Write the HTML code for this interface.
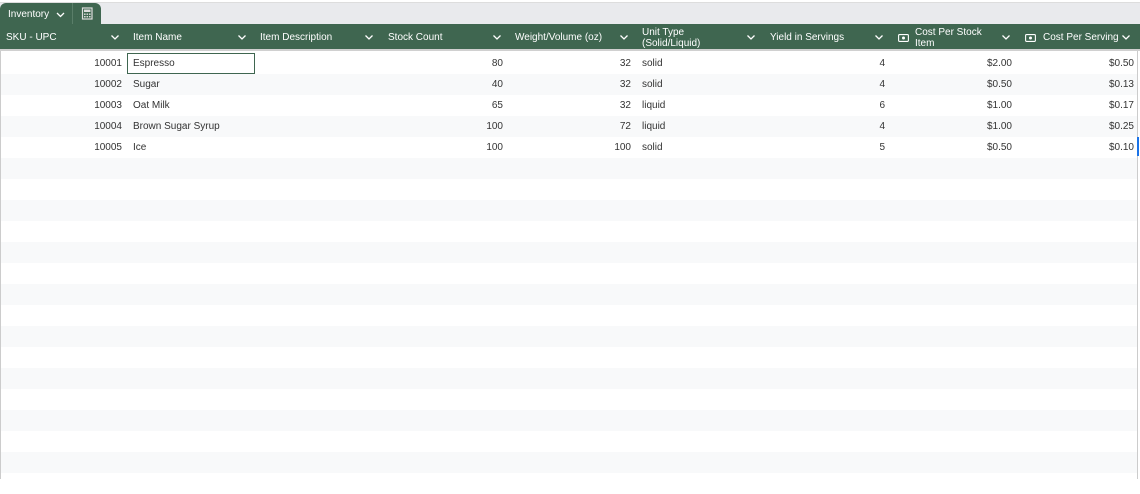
<!DOCTYPE html>
<html><head><style>
*{box-sizing:border-box;margin:0;padding:0}
body{width:1140px;height:479px;overflow:hidden;background:#fff;font-family:"Liberation Sans",sans-serif;font-size:10px;color:#333;position:relative}
.top{position:absolute;left:0;top:0;width:1140px;height:3px;background:#fff;border-bottom:1px solid #ddd}
.bar{position:absolute;left:0;top:3px;width:1140px;height:21px;background:#e9eaed}
.tab{position:absolute;left:0;top:3px;width:101px;height:21px;background:#3f6650;border-radius:6px 6px 0 0;color:#fff;font-size:10px}
.hdr{position:absolute;left:0;top:24px;width:1140px;height:27px;background:#3f6650;color:#fff;border-bottom:2px solid #d0d0d0}
.hc{position:absolute;top:1px;height:25px;display:flex;align-items:center;line-height:11px}
.chev{position:absolute;top:8px;width:10px;height:10px}
.row{position:absolute;left:1px;width:1136px;height:21px}
.c{position:absolute;top:0;height:21px;line-height:21px;font-size:10px;color:#333}
.r{text-align:right}
</style></head><body>
<div class="top"></div>
<div class="bar"></div>
<div class="tab">
<span style="position:absolute;left:8px;top:6px">Inventory</span>
<svg style="position:absolute;left:56px;top:9px" width="9" height="6" viewBox="0 0 9 6"><path d="M1 1l3.5 3.5L8 1" stroke="#fff" stroke-width="1.3" fill="none"/></svg>
<div style="position:absolute;left:72px;top:0;width:1px;height:21px;background:#5a7e69"></div>
<svg style="position:absolute;left:81px;top:4px" width="12" height="13" viewBox="0 0 12 13"><rect x="1.5" y="1" width="9.5" height="11" fill="none" stroke="#ddd" stroke-width="1.2"/><rect x="3" y="2.5" width="6.5" height="2.5" fill="#ddd"/><g fill="#ddd"><rect x="3" y="6.5" width="1.6" height="1.4"/><rect x="5.5" y="6.5" width="1.6" height="1.4"/><rect x="8" y="6.5" width="1.6" height="1.4"/><rect x="3" y="9" width="1.6" height="1.4"/><rect x="5.5" y="9" width="1.6" height="1.4"/><rect x="8" y="9" width="1.6" height="1.4"/></g></svg>
</div>
<div class="hdr">
<div class="hc" style="left:6px">SKU - UPC</div>
<div class="hc" style="left:133px">Item Name</div>
<div class="hc" style="left:260px">Item Description</div>
<div class="hc" style="left:388px">Stock Count</div>
<div class="hc" style="left:515px">Weight/Volume (oz)</div>
<div class="hc" style="left:642px">Unit Type<br>(Solid/Liquid)</div>
<div class="hc" style="left:770px">Yield in Servings</div>
<div class="hc" style="left:915px">Cost Per Stock<br>Item</div>
<div class="hc" style="left:1043px">Cost Per Serving</div>
<svg style="position:absolute;left:898px;top:10px" width="11" height="8" viewBox="0 0 11 8"><rect x="0.6" y="0.6" width="9.8" height="6.8" rx="1" fill="none" stroke="#fff" stroke-width="1.1"/><circle cx="5.5" cy="4" r="1.5" fill="#fff"/></svg>
<svg style="position:absolute;left:1025px;top:10px" width="11" height="8" viewBox="0 0 11 8"><rect x="0.6" y="0.6" width="9.8" height="6.8" rx="1" fill="none" stroke="#fff" stroke-width="1.1"/><circle cx="5.5" cy="4" r="1.5" fill="#fff"/></svg>
<svg class="chev" style="left:110px" viewBox="0 0 10 10"><path d="M1.5 3.5l3.5 3.5 3.5-3.5" stroke="#fff" stroke-width="1.3" fill="none"/></svg>
<svg class="chev" style="left:237px" viewBox="0 0 10 10"><path d="M1.5 3.5l3.5 3.5 3.5-3.5" stroke="#fff" stroke-width="1.3" fill="none"/></svg>
<svg class="chev" style="left:364px" viewBox="0 0 10 10"><path d="M1.5 3.5l3.5 3.5 3.5-3.5" stroke="#fff" stroke-width="1.3" fill="none"/></svg>
<svg class="chev" style="left:492px" viewBox="0 0 10 10"><path d="M1.5 3.5l3.5 3.5 3.5-3.5" stroke="#fff" stroke-width="1.3" fill="none"/></svg>
<svg class="chev" style="left:619px" viewBox="0 0 10 10"><path d="M1.5 3.5l3.5 3.5 3.5-3.5" stroke="#fff" stroke-width="1.3" fill="none"/></svg>
<svg class="chev" style="left:746px" viewBox="0 0 10 10"><path d="M1.5 3.5l3.5 3.5 3.5-3.5" stroke="#fff" stroke-width="1.3" fill="none"/></svg>
<svg class="chev" style="left:874px" viewBox="0 0 10 10"><path d="M1.5 3.5l3.5 3.5 3.5-3.5" stroke="#fff" stroke-width="1.3" fill="none"/></svg>
<svg class="chev" style="left:1001px" viewBox="0 0 10 10"><path d="M1.5 3.5l3.5 3.5 3.5-3.5" stroke="#fff" stroke-width="1.3" fill="none"/></svg>
<svg class="chev" style="left:1121px" viewBox="0 0 10 10"><path d="M1.5 3.5l3.5 3.5 3.5-3.5" stroke="#fff" stroke-width="1.3" fill="none"/></svg>
</div>
<div style="position:absolute;left:0;top:51px;width:1px;height:428px;background:#ccc"></div>
<div style="position:absolute;left:1137px;top:51px;width:1px;height:428px;background:#ccc"></div>
<div id="rows"></div>
<div style="position:absolute;left:127px;top:53px;width:128px;height:21px;border:1.5px solid #3f6650"></div>
<div style="position:absolute;left:1137px;top:137px;width:2px;height:19px;background:#1a73e8"></div>
<script>
var d=[["10001","Espresso","80","32","solid","4","$2.00","$0.50"],["10002","Sugar","40","32","solid","4","$0.50","$0.13"],["10003","Oat Milk","65","32","liquid","6","$1.00","$0.17"],["10004","Brown Sugar Syrup","100","72","liquid","4","$1.00","$0.25"],["10005","Ice","100","100","solid","5","$0.50","$0.10"]];
var h="";
for(var i=0;i<21;i++){var y=53+i*21;h+='<div class="row" style="top:'+y+'px;background:'+(i%2?'#f8f9fa':'#fff')+'">';
if(d[i]){var r=d[i];
h+='<div class="c r" style="left:0;width:121px">'+r[0]+'</div>';
h+='<div class="c" style="left:132px">'+r[1]+'</div>';
h+='<div class="c r" style="left:381px;width:121px">'+r[2]+'</div>';
h+='<div class="c r" style="left:508px;width:122px">'+r[3]+'</div>';
h+='<div class="c" style="left:641px">'+r[4]+'</div>';
h+='<div class="c r" style="left:763px;width:121px">'+r[5]+'</div>';
h+='<div class="c r" style="left:890px;width:121px">'+r[6]+'</div>';
h+='<div class="c r" style="left:1018px;width:115px">'+r[7]+'</div>';}
h+='</div>';}
document.getElementById("rows").innerHTML=h;
</script>
</body></html>
